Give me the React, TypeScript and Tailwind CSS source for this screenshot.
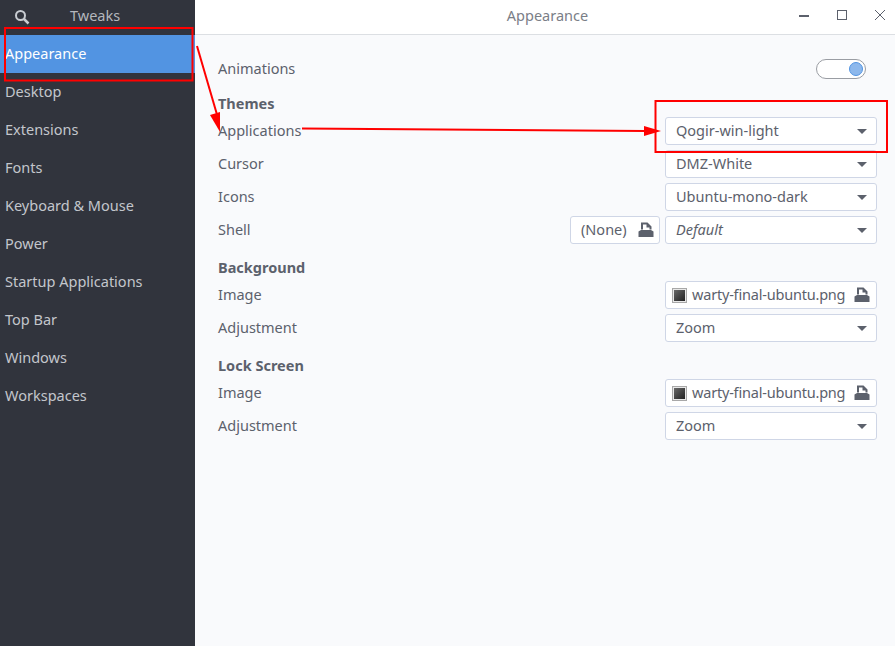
const sidebarItems = ["Appearance", "Desktop", "Extensions", "Fonts", "Keyboard & Mouse", "Power", "Startup Applications", "Top Bar", "Windows", "Workspaces"];

function Caret() {
  return <span className="ml-auto mr-[3px] h-0 w-0 border-x-[5px] border-t-[5px] border-x-transparent border-t-[#5c616c]" />;
}

function FileIcon() {
  return (
    <svg width="16" height="16" viewBox="0 0 16 16" className="block shrink-0">
      <path d="M3 0.500h6.500l4 4v3h-2V5.500H8.500V2.500H5V7.500H3z" fill="#5c616c" />
      <path d="M0.500 9.500l2.500-1.500h10l2.500 1.500v5.500H0.500z" fill="#5c616c" />
      <path d="M9.500 1.500l3.500 3.500H9.500z" fill="#5c616c" />
    </svg>
  );
}

function Thumb() {
  return (
    <span className="flex h-[15px] w-[15px] shrink-0 items-center justify-center border border-[#a8a8a8] bg-[#e8e8e8]">
      <span className="h-[11px] w-[11px] bg-gradient-to-br from-[#6a6a6a] to-[#222]" />
    </span>
  );
}

function Box({ children, className = "" }: { children: React.ReactNode; className?: string }) {
  return <div className={"flex h-[28px] items-center rounded-[3px] border border-[#cfd6e6] bg-white text-[#5c616c] " + className}>{children}</div>;
}

function Select({ value, italic }: { value: string; italic?: boolean }) {
  return (
    <Box className={"w-[212px] pl-[10px] pr-[6px] " + (italic ? "italic" : "")}>
      {value}
      <Caret />
    </Box>
  );
}

function FileButton() {
  return (
    <Box className="w-[212px] pl-[6px] pr-[6px]">
      <Thumb />
      <span className="ml-[5px] tracking-[-0.2px]">warty-final-ubuntu.png</span>
      <span className="ml-auto"><FileIcon /></span>
    </Box>
  );
}

function Row({ label, children }: { label: string; children: React.ReactNode }) {
  return (
    <div className="flex h-[28px] items-center justify-between">
      <span className="text-[#5c616c]">{label}</span>
      <div className="flex items-center gap-[5px]">{children}</div>
    </div>
  );
}

function Heading({ children, className = "" }: { children: React.ReactNode; className?: string }) {
  return <div className={"h-[18px] font-bold leading-[18px] text-[#5c616c] " + className}>{children}</div>;
}

function Annotations() {
  return (
    <svg width="895" height="646" className="pointer-events-none absolute left-0 top-0">
      <rect x="5" y="28" width="187.500" height="52.500" fill="none" stroke="#ff0000" strokeWidth="2" />
      <rect x="655.500" y="101" width="231.500" height="51" fill="none" stroke="#ff0000" strokeWidth="2" />
      <line x1="197" y1="46" x2="218" y2="118" stroke="#ff0000" strokeWidth="2" />
      <polygon points="210,115 220,112 220,132" fill="#ff0000" />
      <line x1="302" y1="128.500" x2="645" y2="131" stroke="#ff0000" strokeWidth="2" />
      <polygon points="644,126 661,131 644,136" fill="#ff0000" />
    </svg>
  );
}

export default function App() {
  return (
    <div className="relative flex h-[646px] w-[895px] overflow-hidden bg-[#f9fafc] text-[14.500px] [font-family:'Noto_Sans',sans-serif]">
      <aside className="w-[195px] shrink-0 bg-[#31343d] text-[#c3c6cc]">
        <div className="flex h-[35px] items-start pt-[5px]">
          <svg width="16" height="16" viewBox="0 0 16 16" className="ml-[14px] mt-[4px]" fill="none" stroke="#c8ccd2" strokeWidth="2">
            <circle cx="6.500" cy="6.500" r="4.500" />
            <path d="M10 10l4.500 4.500" strokeWidth="2.500" />
          </svg>
          <span className="ml-[40px] leading-[21px] text-[#b4b7bd]">Tweaks</span>
        </div>
        {sidebarItems.map((item, i) => (
          <div key={item} className={"flex h-[38px] items-center pl-[5px] " + (i === 0 ? "bg-[#5294e2] text-white" : "")}>{item}</div>
        ))}
      </aside>
      <main className="flex min-w-0 flex-1 flex-col">
        <header className="relative flex h-[35px] shrink-0 items-start justify-center border-b border-[#dcdfe3] bg-white pl-[5px] pt-[5px] leading-[21px] text-[#7a7e87]">
          Appearance
          <div className="absolute right-[10px] top-[10px] flex items-start gap-[28px]">
            <span className="mt-[5px] h-[1.500px] w-[10px] bg-[#5c616c]" />
            <span className="h-[10px] w-[10px] border border-[#5c616c]" />
            <svg width="10" height="10" viewBox="0 0 10 10" stroke="#5c616c" strokeWidth="1"><path d="M0 0l10 10M10 0L0 10" /></svg>
          </div>
        </header>
        <div className="flex flex-col pl-[23px] pr-[18px] pt-[20px]">
          <div className="flex h-[28px] items-center justify-between">
            <span className="text-[#5c616c]">Animations</span>
            <div className="relative mr-[11px] h-[20px] w-[50px] rounded-full border border-[#9a9da3] bg-white">
              <span className="absolute right-[2px] top-[2px] h-[14px] w-[14px] rounded-full border border-[#5294e2] bg-[#8db8ec]" />
            </div>
          </div>
          <Heading className="mt-[11px]">Themes</Heading>
          <div className="mt-[5px] flex flex-col gap-[5px]">
            <Row label="Applications"><Select value="Qogir-win-light" /></Row>
            <Row label="Cursor"><Select value="DMZ-White" /></Row>
            <Row label="Icons"><Select value="Ubuntu-mono-dark" /></Row>
            <Row label="Shell">
              <Box className="w-[90px] pl-[10px] pr-[5px]">(None)<span className="ml-auto"><FileIcon /></span></Box>
              <Select value="Default" italic />
            </Row>
          </div>
          <Heading className="mt-[14px]">Background</Heading>
          <div className="mt-[5px] flex flex-col gap-[5px]">
            <Row label="Image"><FileButton /></Row>
            <Row label="Adjustment"><Select value="Zoom" /></Row>
          </div>
          <Heading className="mt-[14px]">Lock Screen</Heading>
          <div className="mt-[5px] flex flex-col gap-[5px]">
            <Row label="Image"><FileButton /></Row>
            <Row label="Adjustment"><Select value="Zoom" /></Row>
          </div>
        </div>
      </main>
      <Annotations />
    </div>
  );
}
